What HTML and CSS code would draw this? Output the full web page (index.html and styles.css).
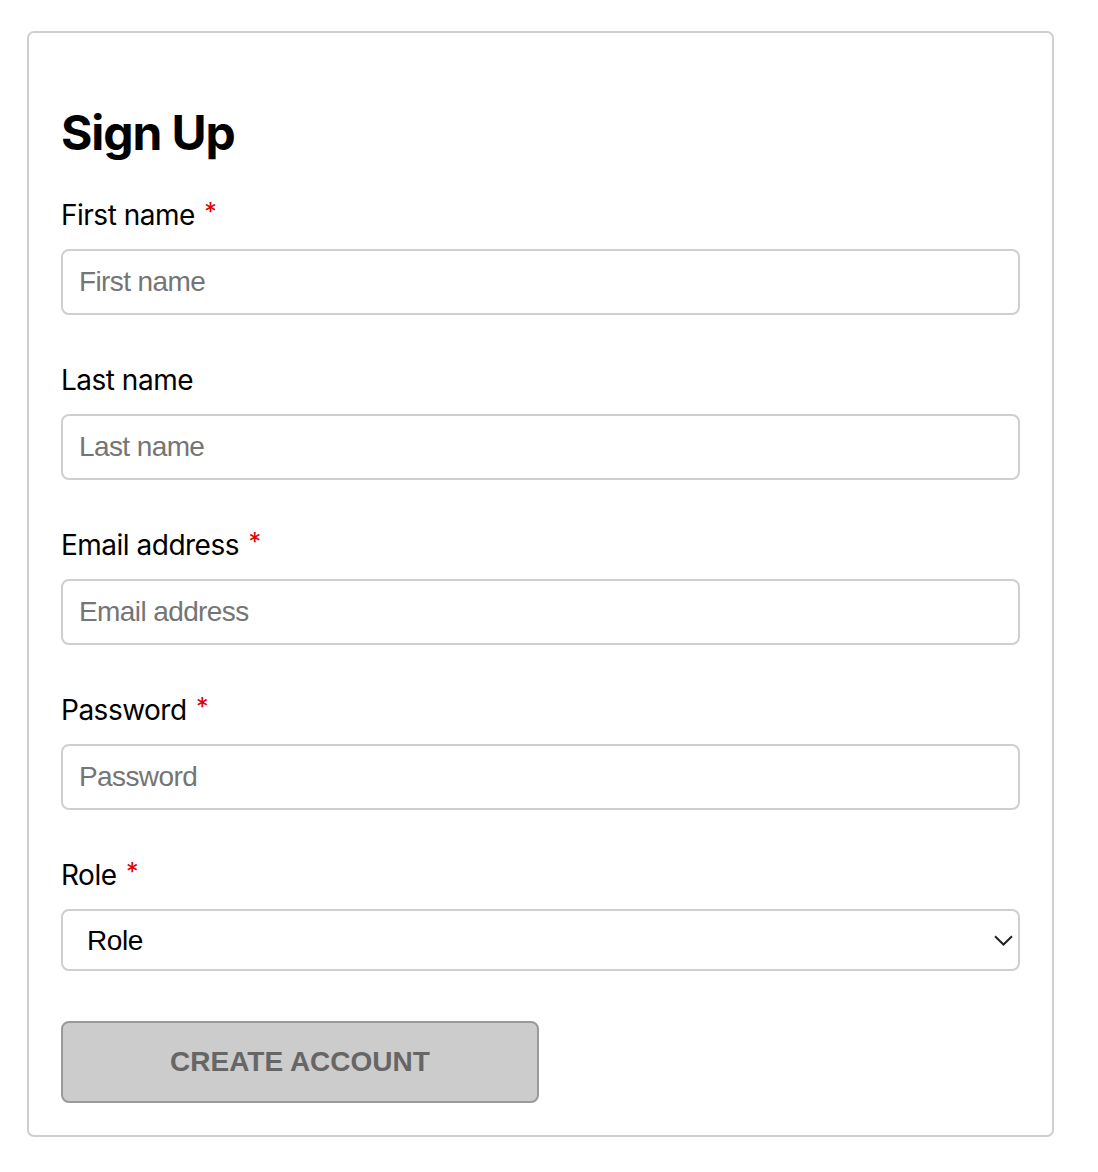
FILE: index.html
```html
<!DOCTYPE html>
<html lang="en">
<head>
<meta charset="utf-8">
<title>Sign Up</title>
<link rel="stylesheet" href="styles.css">
</head>
<body>
<form class="card">
  <h2 class="title">Sign Up</h2>
  <div class="field">
    <label class="label" for="fn">First name <span class="req">*</span></label>
    <input class="input" id="fn" type="text" placeholder="First name">
  </div>
  <div class="field">
    <label class="label" for="ln">Last name</label>
    <input class="input" id="ln" type="text" placeholder="Last name">
  </div>
  <div class="field">
    <label class="label" for="em">Email address <span class="req">*</span></label>
    <input class="input" id="em" type="email" placeholder="Email address">
  </div>
  <div class="field">
    <label class="label" for="pw">Password <span class="req">*</span></label>
    <input class="input" id="pw" type="password" placeholder="Password">
  </div>
  <div class="field last">
    <label class="label" for="role">Role <span class="req">*</span></label>
    <div class="select-wrap">
      <select class="select" id="role">
        <option>Role</option>
      </select>
      <svg class="chevron" width="19" height="11" viewBox="0 0 19 11"><path d="M1 1.2 L9.5 9.5 L18 1.2" fill="none" stroke="#222" stroke-width="2"/></svg>
    </div>
  </div>
  <button class="btn" type="button" disabled>CREATE ACCOUNT</button>
</form>
</body>
</html>
```
FILE: styles.css
```css
html, body {
  margin: 0;
  padding: 0;
  background: #fff;
}
body {
  padding: 31px 0 0 27px;
}
.card {
  box-sizing: border-box;
  width: 1027px;
  border: 2px solid #cfcfcf;
  border-radius: 7px;
  padding: 71px 32px 32px 32px;
  display: flex;
  flex-direction: column;
}
.title {
  margin: 0 0 36px 0;
  font-family: Inter, "Liberation Sans", sans-serif;
  font-size: 48px;
  line-height: 58px;
  font-weight: 700;
  color: #000;
  letter-spacing: -1.1px;
}
.field {
  display: flex;
  flex-direction: column;
  gap: 17px;
  margin-bottom: 48px;
}
.field.last {
  margin-bottom: 50px;
}
.label {
  display: block;
  height: 34px;
  font-family: Inter, "Liberation Sans", sans-serif;
  font-size: 28px;
  line-height: 34px;
  color: #000;
  letter-spacing: -0.5px;
}
.req {
  color: #e00000;
  font-size: 25px;
  margin-left: 2px;
  line-height: 0;
  position: relative;
  top: -4px;
}
.input {
  box-sizing: border-box;
  height: 66px;
  width: 100%;
  margin: 0;
  border: 2px solid #cfcfcf;
  border-radius: 8px;
  padding: 0 16px;
  font-family: "Liberation Sans", Arial, sans-serif;
  font-size: 28px;
  letter-spacing: -0.6px;
  color: #000;
  background: #fff;
  outline: none;
}
.input::placeholder {
  color: #757575;
}
.select-wrap {
  position: relative;
  height: 62px;
}
.select {
  box-sizing: border-box;
  width: 100%;
  height: 62px;
  margin: 0;
  border: 2px solid #cfcfcf;
  border-radius: 8px;
  padding: 0 24px;
  font-family: "Liberation Sans", Arial, sans-serif;
  font-size: 28px;
  letter-spacing: -0.4px;
  color: #000;
  background: #fff;
  -webkit-appearance: none;
  appearance: none;
  outline: none;
}
.chevron {
  position: absolute;
  right: 7px;
  top: 26px;
  pointer-events: none;
}
.btn {
  box-sizing: border-box;
  width: 478px;
  height: 82px;
  margin: 0;
  border: 2px solid #9a9a9a;
  border-radius: 8px;
  background: #cccccc;
  color: #666;
  font-family: "Liberation Sans", Arial, sans-serif;
  font-weight: 700;
  font-size: 28px;
  padding: 0;
}
```
